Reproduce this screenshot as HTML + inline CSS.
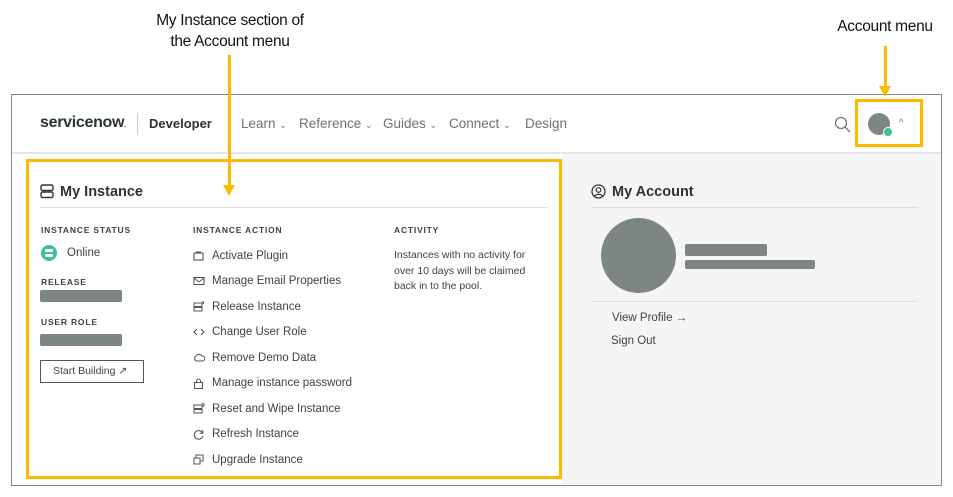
<!DOCTYPE html>
<html><head><meta charset="utf-8"><style>
*{margin:0;padding:0;box-sizing:border-box}
body{width:953px;height:497px;background:#fff;position:relative;overflow:hidden;font-family:"Liberation Sans",sans-serif;color:#2f3a3a}
.a{position:absolute}
.ann{font-size:15.5px;color:#111;text-align:center;letter-spacing:-0.3px}
.nav{font-size:13.5px;color:#6b7373}
.lbl{font-size:8.5px;font-weight:bold;letter-spacing:0.8px;color:#3b4444}
.item{font-size:11.5px;color:#3b4444}
.row{height:25.5px;display:flex;align-items:center}
.row svg{width:19px;flex:none}
.bar{background:#7d8585;border-radius:2px}
</style></head><body>
<div class="a ann" style="left:130px;top:10px;width:200px;line-height:21px">My Instance section of<br>the Account menu</div>
<div class="a ann" style="left:825px;top:18px;width:120px">Account menu</div>

<div class="a" style="left:11px;top:94px;width:931px;height:392px;border:1px solid #888"></div>
<div class="a" style="left:12px;top:152px;width:929px;height:2px;background:#e6e6e6"></div>
<div class="a" style="left:562px;top:154px;width:379px;height:331px;background:#f5f5f5"></div>

<div class="a" style="left:40px;top:114px;font-size:16px;font-weight:bold;color:#2b3535;letter-spacing:-0.3px">servicenow<span style="font-size:7px">.</span></div>
<div class="a" style="left:137px;top:113px;width:1px;height:22px;background:#ccc"></div>
<div class="a" style="left:149px;top:116px;font-size:13px;font-weight:bold;color:#2b3535">Developer</div>
<div class="a nav" style="left:241px;top:116px">Learn <span style="font-size:9px">⌄</span></div>
<div class="a nav" style="left:299px;top:116px">Reference <span style="font-size:9px">⌄</span></div>
<div class="a nav" style="left:383px;top:116px">Guides <span style="font-size:9px">⌄</span></div>
<div class="a nav" style="left:449px;top:116px">Connect <span style="font-size:9px">⌄</span></div>
<div class="a nav" style="left:525px;top:116px">Design</div>
<svg class="a" style="left:834px;top:116px" width="18" height="18"><circle cx="7" cy="7" r="5.5" fill="none" stroke="#777" stroke-width="1.3"/><line x1="11" y1="11" x2="16" y2="16" stroke="#777" stroke-width="1.3"/></svg>
<div class="a" style="left:868px;top:113px;width:22px;height:22px;border-radius:50%;background:#7d8585"></div>
<div class="a" style="left:883px;top:127px;width:10px;height:10px;border-radius:50%;background:#3cbf9e;border:1px solid #fff"></div>
<div class="a" style="left:899px;top:117px;font-size:9px;color:#666">^</div>
<div class="a" style="left:855px;top:99px;width:68px;height:48px;border:3px solid #fbb900"></div>

<div class="a" style="left:26px;top:159px;width:536px;height:320px;border:3px solid #fbb900"></div>
<svg class="a" style="left:40px;top:184px" width="14" height="15"><rect x="1" y="1" width="12" height="5.5" rx="1.5" fill="none" stroke="#333" stroke-width="1.4"/><rect x="1" y="8" width="12" height="5.5" rx="1.5" fill="none" stroke="#333" stroke-width="1.4"/></svg>
<div class="a" style="left:60px;top:184px;font-size:14.5px;font-weight:bold;color:#2b3535">My Instance</div>
<div class="a" style="left:40px;top:207px;width:507px;height:1px;background:#ddd"></div>

<div class="a lbl" style="left:41px;top:225px">INSTANCE STATUS</div>
<div class="a" style="left:41px;top:245px;width:16px;height:16px;border-radius:50%;background:#3cbf9e"></div>
<div class="a" style="left:45px;top:249px;width:8px;height:3px;background:#fff;border-radius:1px"></div>
<div class="a" style="left:45px;top:254px;width:8px;height:3px;background:#fff;border-radius:1px"></div>
<div class="a item" style="left:67px;top:247px">Online</div>
<div class="a lbl" style="left:41px;top:277px">RELEASE</div>
<div class="a bar" style="left:40px;top:290px;width:82px;height:12px"></div>
<div class="a lbl" style="left:41px;top:317px">USER ROLE</div>
<div class="a bar" style="left:40px;top:334px;width:82px;height:12px"></div>
<div class="a" style="left:40px;top:360px;width:104px;height:23px;border:1.5px solid #555;font-size:10.5px;color:#3b4444;padding:4px 0 0 12px">Start Building ↗</div>

<div class="a lbl" style="left:193px;top:225px">INSTANCE ACTION</div>
<div class="a item" style="left:193px;top:243px;width:180px">
<div class="row"><svg height="10" viewBox="0 0 19 10"><rect x="1" y="2" width="9" height="7" fill="none" stroke="#555" stroke-width="1.1"/><line x1="3" y1="1" x2="8" y2="1" stroke="#555"/></svg>Activate Plugin</div>
<div class="row"><svg height="10" viewBox="0 0 19 10"><rect x="1" y="1.5" width="10" height="7" fill="none" stroke="#555" stroke-width="1.1"/><path d="M1 2 L6 6 L11 2" fill="none" stroke="#555"/></svg>Manage Email Properties</div>
<div class="row"><svg height="11" viewBox="0 0 19 11"><rect x="1" y="2" width="8" height="3.5" fill="none" stroke="#555"/><rect x="1" y="6.5" width="8" height="3.5" fill="none" stroke="#555"/><path d="M9 1 l1.5 -0 l0 2" fill="none" stroke="#555"/></svg>Release Instance</div>
<div class="row"><svg height="10" viewBox="0 0 19 10"><path d="M4 2 L1 5 L4 8 M8 2 L11 5 L8 8" fill="none" stroke="#555" stroke-width="1.1"/></svg>Change User Role</div>
<div class="row"><svg height="10" viewBox="0 0 19 10"><path d="M3 8 A3 3 0 0 1 3 3 A3.5 3.5 0 0 1 9 3 A2.5 2.5 0 0 1 9.5 8 Z" fill="none" stroke="#555"/></svg>Remove Demo Data</div>
<div class="row"><svg height="11" viewBox="0 0 19 11"><rect x="1.5" y="4.5" width="8" height="6" fill="none" stroke="#555" stroke-width="1.1"/><path d="M3.5 4.5 V3 a2 2 0 0 1 4 0 V4.5" fill="none" stroke="#555"/></svg>Manage instance password</div>
<div class="row"><svg height="11" viewBox="0 0 19 11"><rect x="1" y="2" width="8" height="3.5" fill="none" stroke="#555"/><rect x="1" y="6.5" width="8" height="3.5" fill="none" stroke="#555"/><circle cx="10" cy="2" r="1.2" fill="none" stroke="#555"/></svg>Reset and Wipe Instance</div>
<div class="row"><svg height="11" viewBox="0 0 19 11"><path d="M9.5 4 A4.3 4.3 0 1 0 9.8 7" fill="none" stroke="#555" stroke-width="1.1"/><path d="M9.8 1 V4.2 H6.8" fill="none" stroke="#555"/></svg>Refresh Instance</div>
<div class="row"><svg height="11" viewBox="0 0 19 11"><rect x="1" y="4" width="6" height="6" fill="none" stroke="#555"/><path d="M3 4 V1 H10 V7 H7" fill="none" stroke="#555"/></svg>Upgrade Instance</div>
</div>

<div class="a lbl" style="left:394px;top:225px">ACTIVITY</div>
<div class="a" style="left:394px;top:248px;font-size:10.5px;line-height:15.5px;color:#3b4444;width:150px">Instances with no activity for over 10 days will be claimed back in to the pool.</div>

<svg class="a" style="left:591px;top:184px" width="15" height="15"><circle cx="7.5" cy="7.5" r="6.5" fill="none" stroke="#333" stroke-width="1.3"/><circle cx="7.5" cy="6" r="2.3" fill="none" stroke="#333" stroke-width="1.2"/><path d="M3.5 12 Q7.5 8.5 11.5 12" fill="none" stroke="#333" stroke-width="1.2"/></svg>
<div class="a" style="left:612px;top:184px;font-size:14.5px;font-weight:bold;color:#2b3535">My Account</div>
<div class="a" style="left:592px;top:207px;width:326px;height:1px;background:#ddd"></div>
<div class="a" style="left:601px;top:218px;width:75px;height:75px;border-radius:50%;background:#7d8585"></div>
<div class="a bar" style="left:685px;top:244px;width:82px;height:12px"></div>
<div class="a bar" style="left:685px;top:260px;width:130px;height:9px"></div>
<div class="a" style="left:592px;top:301px;width:326px;height:1px;background:#ddd"></div>
<div class="a item" style="left:612px;top:312px">View Profile →</div>
<div class="a item" style="left:611px;top:335px">Sign Out</div>

<div class="a" style="left:228px;top:55px;width:3px;height:132px;background:#fbb900"></div>
<div class="a" style="left:223px;top:185px;width:0;height:0;border-left:6.5px solid transparent;border-right:6.5px solid transparent;border-top:11px solid #fbb900"></div>
<div class="a" style="left:884px;top:46px;width:3px;height:42px;background:#fbb900"></div>
<div class="a" style="left:879px;top:86px;width:0;height:0;border-left:6.5px solid transparent;border-right:6.5px solid transparent;border-top:11px solid #fbb900"></div>
</body></html>
